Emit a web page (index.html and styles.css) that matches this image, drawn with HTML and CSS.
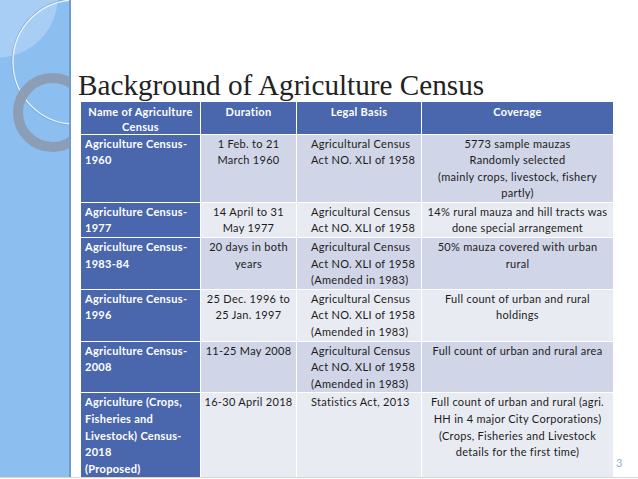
FILE: index.html
```html
<!DOCTYPE html>
<html lang="en">
<head>
<meta charset="utf-8">
<title>Background of Agriculture Census</title>
<link rel="stylesheet" href="styles.css">
</head>
<body>
<div class="slide">
  <div class="strip">
    <svg class="deco" width="69" height="477" viewBox="0 0 69 477" xmlns="http://www.w3.org/2000/svg">
      <rect x="0" y="0" width="69" height="477" fill="#8cbef0"/>
      <circle cx="-4" cy="-4" r="62" fill="#a9cef5"/>
      <circle cx="75" cy="62" r="63.2" fill="none" stroke="#6f8fb8" stroke-width="1" opacity="0.55"/>
      <circle cx="75" cy="62" r="62" fill="none" stroke="#f2f8ff" stroke-width="1.3" opacity="0.9"/>
      <circle cx="52.5" cy="112.5" r="34.5" fill="none" stroke="#8b9bb0" stroke-width="10" opacity="0.92"/>
    </svg>
  </div>
  <div class="main">
    <h1 class="title">Background of Agriculture Census</h1>
    <div class="content">
      <table class="census">
        <colgroup>
          <col class="c1"><col class="c2"><col class="c3"><col class="c4">
        </colgroup>
        <thead>
          <tr>
            <th>Name of Agriculture<br>Census</th>
            <th>Duration</th>
            <th>Legal Basis</th>
            <th>Coverage</th>
          </tr>
        </thead>
        <tbody>
          <tr class="odd">
            <td class="name">Agriculture Census-<br>1960</td>
            <td class="mid">1 Feb. to 21<br>March 1960</td>
            <td class="law">Agricultural Census<br>Act NO. XLI of 1958</td>
            <td class="mid">5773 sample mauzas<br>Randomly selected<br>(mainly crops, livestock, fishery<br>partly)</td>
          </tr>
          <tr class="even">
            <td class="name">Agriculture Census-<br>1977</td>
            <td class="mid">14 April to 31<br>May 1977</td>
            <td class="law">Agricultural Census<br>Act NO. XLI of 1958</td>
            <td class="mid">14% rural mauza and hill tracts was<br>done special arrangement</td>
          </tr>
          <tr class="odd">
            <td class="name">Agriculture Census-<br>1983-84</td>
            <td class="mid">20 days in both<br>years</td>
            <td class="law">Agricultural Census<br>Act NO. XLI of 1958<br>(Amended in 1983)</td>
            <td class="mid">50% mauza covered with urban<br>rural</td>
          </tr>
          <tr class="even">
            <td class="name">Agriculture Census-<br>1996</td>
            <td class="mid">25 Dec. 1996 to<br>25 Jan. 1997</td>
            <td class="law">Agricultural Census<br>Act NO. XLI of 1958<br>(Amended in 1983)</td>
            <td class="mid">Full count of urban and rural<br>holdings</td>
          </tr>
          <tr class="odd">
            <td class="name">Agriculture Census-<br>2008</td>
            <td class="mid">11-25 May 2008</td>
            <td class="law">Agricultural Census<br>Act NO. XLI of 1958<br>(Amended in 1983)</td>
            <td class="mid">Full count of urban and rural area</td>
          </tr>
          <tr class="even">
            <td class="name">Agriculture (Crops,<br>Fisheries and<br>Livestock) Census-<br>2018<br>(Proposed)</td>
            <td class="mid">16-30 April 2018</td>
            <td class="law">Statistics Act, 2013</td>
            <td class="mid">Full count of urban and rural (agri.<br>HH in 4 major City Corporations)<br>(Crops, Fisheries and Livestock<br>details for the first time)</td>
          </tr>
        </tbody>
      </table>
      <span class="page-num">3</span>
    </div>
  </div>
</div>
</body>
</html>
```

FILE: styles.css
```css
html, body {
  margin: 0;
  padding: 0;
}

body {
  width: 638px;
  height: 479px;
  overflow: hidden;
  background: #ffffff;
}

.slide {
  display: flex;
  height: 477px;
  border-bottom: 1px solid #d6d6d6;
  overflow: hidden;
  background: #ffffff;
}

.strip {
  width: 69px;
  flex: none;
  border-right: 2px solid #6f9ccf;
  overflow: hidden;
}

.deco {
  display: block;
}

.main {
  flex: 1;
  min-width: 0;
  padding: 70px 0 0 7px;
}

.title {
  margin: 0 0 1px 0;
  font-family: "Liberation Serif", "Times New Roman", serif;
  font-weight: normal;
  font-size: 29.2px;
  line-height: 30px;
  color: #222222;
  white-space: nowrap;
}

.content {
  display: flex;
  align-items: flex-end;
  margin-left: 2px;
}

.census {
  flex: none;
  border-collapse: collapse;
  table-layout: fixed;
  width: 533px;
  font-family: Lato, "Open Sans", sans-serif;
  font-size: 11px;
  letter-spacing: 0.3px;
  line-height: 16.6px;
  color: #1c1c1c;
}

.c1 { width: 120px; }
.c2 { width: 96px; }
.c3 { width: 125px; }
.c4 { width: 192px; }

.census th,
.census td {
  border: 1px solid #ffffff;
  padding: 1px 3px 0 3px;
  vertical-align: top;
  white-space: nowrap;
}

.census th {
  background: #4a67ad;
  color: #ffffff;
  font-weight: bold;
  text-align: center;
  line-height: 15px;
  padding-top: 1.5px;
}

.census td.name {
  background: #4a67ad;
  color: #ffffff;
  font-weight: bold;
  text-align: left;
  padding-left: 4px;
}

.census tr.odd td {
  background: #d0d5e7;
}

.census tr.even td {
  background: #e9ebf2;
}

.census tr td.name {
  background: #4a67ad;
}

.census td.mid {
  text-align: center;
}

.census td.law {
  text-align: left;
  padding-left: 14px;
}

.page-num {
  margin: 0 0 8px 2px;
  font-family: Lato, "Open Sans", sans-serif;
  font-size: 11px;
  line-height: 14px;
  color: #8fb3d6;
}
```
